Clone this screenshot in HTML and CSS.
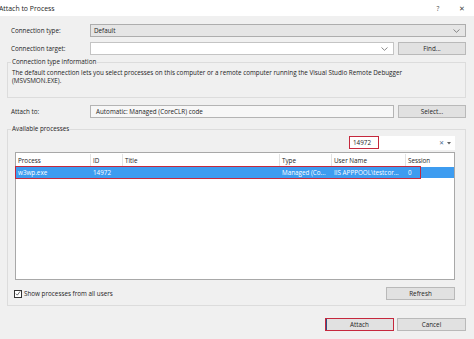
FILE: index.html
```html
<!DOCTYPE html>
<html>
<head>
<meta charset="utf-8">
<title>Attach to Process</title>
<link rel="stylesheet" href="styles.css">
</head>
<body>
<div class="dialog">
  <div class="titlebar">
    <span class="title">Attach to Process</span>
    <span class="tb-btn">?</span>
    <span class="tb-btn tb-close">&#x2715;</span>
  </div>
  <div class="content">
    <div class="row row-first">
      <span class="lbl">Connection type:</span>
      <div class="combo combo-ro">
        <span class="combo-text">Default</span>
        <svg class="chev" viewBox="0 0 7 4" width="7" height="4"><polyline points="0.5,0.5 3.5,3.3 6.5,0.5" fill="none" stroke="#7a7a7a" stroke-width="0.9"/></svg>
      </div>
    </div>
    <div class="row">
      <span class="lbl">Connection target:</span>
      <div class="combo combo-edit">
        <span class="combo-text"></span>
        <svg class="chev" viewBox="0 0 7 4" width="7" height="4"><polyline points="0.5,0.5 3.5,3.3 6.5,0.5" fill="none" stroke="#7a7a7a" stroke-width="0.9"/></svg>
      </div>
      <button class="btn btn-side">Find...</button>
    </div>
    <fieldset class="group group-info">
      <legend>Connection type information</legend>
      <p class="info-text">The default connection lets you select processes on this computer or a remote computer running the Visual Studio Remote Debugger<br>(MSVSMON.EXE).</p>
    </fieldset>
    <div class="row row-attach">
      <span class="lbl">Attach to:</span>
      <div class="field-ro">Automatic: Managed (CoreCLR) code</div>
      <button class="btn btn-side">Select...</button>
    </div>
    <fieldset class="group group-procs">
      <legend>Available processes</legend>
      <div class="search-row">
        <div class="search">
          <span class="search-hl">14972</span>
          <span class="search-fill"></span>
          <span class="search-clear">&#x2715;</span>
          <svg class="search-drop" viewBox="0 0 4 3" width="4" height="3"><polygon points="0,0 4,0 2,2.5" fill="#606060"/></svg>
        </div>
      </div>
      <div class="list">
        <div class="lrow lhead">
          <span class="cell">Process</span>
          <span class="cell">ID</span>
          <span class="cell">Title</span>
          <span class="cell">Type</span>
          <span class="cell">User Name</span>
          <span class="cell">Session</span>
        </div>
        <div class="lrow lsel">
          <span class="cell">w3wp.exe</span>
          <span class="cell">14972</span>
          <span class="cell"></span>
          <span class="cell">Managed (Co...</span>
          <span class="cell">IIS APPPOOL\testcor...</span>
          <span class="cell">0</span>
          <span class="mark"></span>
        </div>
      </div>
      <div class="opt-row">
        <label class="chk">
          <span class="chk-box"><svg viewBox="0 0 8 8" width="7" height="7"><polyline points="1.2,4.2 3.1,6.2 6.8,1.2" fill="none" stroke="#222" stroke-width="0.9"/></svg></span>
          Show processes from all users
        </label>
        <button class="btn btn-refresh">Refresh</button>
      </div>
    </fieldset>
    <div class="footer">
      <button class="btn btn-foot btn-attach">Attach</button>
      <button class="btn btn-foot">Cancel</button>
    </div>
  </div>
</div>
</body>
</html>
```

FILE: styles.css
```css
* { box-sizing: border-box; }
html, body { margin: 0; padding: 0; }
body {
  width: 474px;
  height: 339px;
  overflow: hidden;
  background: #f0f0f0;
  font-family: "Open Sans", "Noto Sans", sans-serif;
  font-size: 6.3px;
  color: #1e1e1e;
}
.dialog { width: 474px; height: 339px; display: flex; flex-direction: column; }

.titlebar {
  height: 16px;
  background: #ffffff;
  display: flex;
  align-items: center;
  font-size: 6.9px;
  color: #222;
}
.title { flex: 1; margin-left: -1px; }
.tb-btn { width: 26px; text-align: center; color: #444; font-size: 6.5px; }
.tb-close { width: 22px; margin-right: 1px; font-size: 7px; }

.content {
  flex: 1;
  padding: 8px 8px 0 7px;
  display: flex;
  flex-direction: column;
}

.row {
  display: flex;
  align-items: center;
  height: 13px;
  gap: 4px;
  margin-top: 5px;
}
.row-first { margin-top: 0; }
.row-attach { margin-top: 7px; }
.lbl { width: 79px; padding-left: 4px; flex: none; }

.combo {
  flex: 1;
  height: 13px;
  display: flex;
  align-items: center;
  padding: 0 5px 0 3px;
  border: 1px solid #b4b4b4;
}
.combo-ro { background: #e5e5e5; border-color: #adadad; }
.combo-edit { background: #ffffff; border-color: #c4c4c4; }
.combo-text { flex: 1; }
.chev { flex: none; }

.btn {
  font: inherit;
  color: #1e1e1e;
  background: #e1e1e1;
  border: 1px solid #b9b9b9;
  height: 13px;
  padding: 0;
  margin: 0;
}
.btn-side { width: 68px; flex: none; }

.group {
  margin: 3px 0 0 0;
  border: 1px solid #dcdcdc;
  padding: 0 4px;
  min-inline-size: 0;
}
.group legend {
  padding: 0 1px;
  margin-left: -1px;
  line-height: 8px;
  height: 8px;
}
.group-info { height: 40px; }
.info-text { margin: 3px 0 0 0; line-height: 8px; }

.field-ro {
  flex: 1;
  height: 13px;
  display: flex;
  align-items: center;
  padding-left: 5px;
  background: #f7f7f7;
  border: 1px solid #b4b4b4;
}

.group-procs {
  margin-top: 7px;
  padding: 0 10px 5px 7px;
}
.group-procs legend { margin-left: -4px; }

.search-row { display: flex; justify-content: flex-end; margin-top: 3px; }
.search {
  width: 106px;
  height: 14px;
  background: #ffffff;
  display: flex;
  align-items: center;
  padding-right: 4px;
}
.search-hl {
  width: 30px;
  height: 13px;
  border: 1.5px solid #c5283d;
  padding-left: 3px;
  display: flex;
  align-items: center;
  align-self: flex-start;
}
.search-fill { flex: 1; }
.search-clear { color: #4a6a90; font-size: 6px; margin-right: 3px; }
.search-drop { flex: none; }

.list {
  margin-top: 2px;
  height: 128px;
  background: #ffffff;
  border: 1px solid #a8a8a8;
}
.lrow {
  display: grid;
  grid-template-columns: 74px 32px 157px 52px 74px 1fr;
  align-items: center;
}
.lhead { height: 14px; }
.lhead .cell { border-left: 1px solid #e3e3e3; height: 13px; display: flex; align-items: center; }
.lhead .cell:first-child { border-left: none; }
.cell { padding-left: 2px; white-space: nowrap; overflow: hidden; }
.lsel {
  height: 11px;
  background: #3d9cf0;
  color: #ffffff;
  position: relative;
}
.lsel .cell { padding-left: 3px; }
.lsel .cell:first-child { padding-left: 2px; }
.mark {
  position: absolute;
  left: -1px;
  top: -1px;
  width: 406px;
  height: 13px;
  border: 1.5px solid #c5283d;
}

.opt-row {
  margin-top: 7px;
  display: flex;
  align-items: center;
  justify-content: space-between;
  height: 13px;
  margin-left: -1px;
}
.chk { display: flex; align-items: center; gap: 2px; }
.chk-box {
  width: 8px;
  height: 8px;
  border: 1px solid #333;
  background: #fff;
  display: flex;
  align-items: center;
  justify-content: center;
}
.btn-refresh { width: 69px; }

.footer {
  display: flex;
  justify-content: flex-end;
  gap: 3px;
  margin-top: 12px;
}
.btn-foot { width: 69px; }
.btn-attach { border: 1.5px solid #c5283d; box-shadow: inset 1px 0 0 #2f4f86; }
```
